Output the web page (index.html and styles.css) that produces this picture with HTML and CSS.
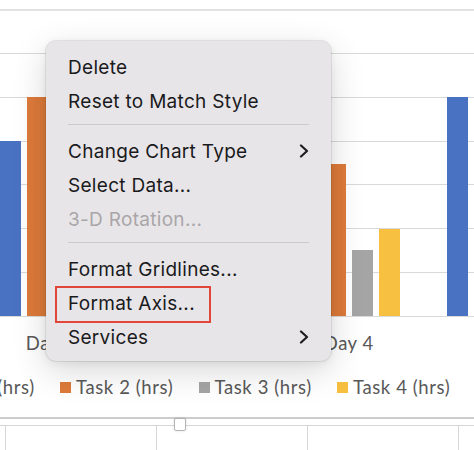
FILE: index.html
```html
<!DOCTYPE html>
<html>
<head>
<meta charset="utf-8">
<link rel="stylesheet" href="styles.css">
</head>
<body>
<div class="page">
  <div class="chart">
    <div class="plot">
      <div class="group">
        <div class="bar b1" style="height:175px"></div>
        <div class="bar b2" style="height:219px"></div>
        <div class="bar b3" style="height:131px"></div>
        <div class="bar b4" style="height:88px"></div>
      </div>
      <div class="group">
        <div class="bar b1" style="height:160px"></div>
        <div class="bar b2" style="height:200px"></div>
        <div class="bar b3" style="height:110px"></div>
        <div class="bar b4" style="height:140px"></div>
      </div>
      <div class="group">
        <div class="bar b1" style="height:200px"></div>
        <div class="bar b2" style="height:152px"></div>
        <div class="bar b3" style="height:66px"></div>
        <div class="bar b4" style="height:87px"></div>
      </div>
      <div class="group">
        <div class="bar b1" style="height:219px"></div>
        <div class="bar b2" style="height:150px"></div>
        <div class="bar b3" style="height:100px"></div>
        <div class="bar b4" style="height:120px"></div>
      </div>
    </div>
    <div class="cats">
      <span class="cat">Day 2</span>
      <span class="cat">Day 3</span>
      <span class="cat">Day 4</span>
    </div>
    <div class="legend">
      <div class="legend-item"><span class="swatch b1"></span><span>Task 1 (hrs)</span></div>
      <div class="legend-item"><span class="swatch b2"></span><span>Task 2 (hrs)</span></div>
      <div class="legend-item"><span class="swatch b3"></span><span>Task 3 (hrs)</span></div>
      <div class="legend-item"><span class="swatch b4"></span><span>Task 4 (hrs)</span></div>
    </div>
  </div>
  <div class="cells">
    <div class="cell"></div>
    <div class="cell"></div>
    <div class="cell"></div>
    <div class="cell"></div>
  </div>
  <div class="handle"></div>

  <div class="menu">
    <div class="item">Delete</div>
    <div class="item">Reset to Match Style</div>
    <div class="sep"></div>
    <div class="item">Change Chart Type
      <svg class="chev" width="10" height="14" viewBox="0 0 10 14"><polyline points="2,1.5 8,7 2,12.5" fill="none" stroke="#1e1e20" stroke-width="2.2" stroke-linecap="round" stroke-linejoin="round"/></svg>
    </div>
    <div class="item">Select Data...</div>
    <div class="item disabled">3-D Rotation...</div>
    <div class="sep"></div>
    <div class="item">Format Gridlines...</div>
    <div class="item">Format Axis...</div>
    <div class="item">Services
      <svg class="chev" width="10" height="14" viewBox="0 0 10 14"><polyline points="2,1.5 8,7 2,12.5" fill="none" stroke="#1e1e20" stroke-width="2.2" stroke-linecap="round" stroke-linejoin="round"/></svg>
    </div>
  </div>
  <div class="highlight"></div>
</div>
</body>
</html>
```
FILE: styles.css
```css
html, body {
  margin: 0;
  padding: 0;
  background: #ffffff;
}
.page {
  position: relative;
  width: 474px;
  height: 450px;
  overflow: hidden;
  padding-top: 9px;
  box-sizing: border-box;
}
.chart {
  border-top: 2px solid #e2e2e2;
  border-bottom: 2px solid #cdcdcd;
  height: 410px;
  box-sizing: border-box;
  font-family: "Lato", "Liberation Sans", sans-serif;
  color: #595959;
}
.plot {
  margin-top: 42px;
  height: 264px;
  box-sizing: border-box;
  border-bottom: 1px solid #d9d9d9;
  background: repeating-linear-gradient(to bottom, #d9d9d9 0, #d9d9d9 1px, transparent 1px, transparent 43.83px);
  display: flex;
  align-items: flex-end;
  gap: 47.5px;
}
.group {
  display: flex;
  align-items: flex-end;
  gap: 6.5px;
  flex: 0 0 auto;
}
.bar {
  width: 20.5px;
}
.b1 { background: #4a72c2; }
.b2 { background: #dd7a3a; }
.b3 { background: #a5a5a5; }
.b4 { background: #f7c040; }
.cats {
  display: flex;
  gap: 47.5px;
  padding-top: 16px;
  font-size: 18.5px;
  letter-spacing: 0.5px;
  line-height: 20px;
}
.cat {
  flex: 0 0 101.5px;
  text-align: center;
  white-space: nowrap;
}
.legend {
  display: flex;
  margin-top: 24px;
  margin-left: -78.5px;
  font-size: 18.5px;
  letter-spacing: 0.6px;
  line-height: 20px;
}
.legend-item {
  flex: 0 0 138.5px;
  display: flex;
  align-items: center;
  gap: 5px;
  white-space: nowrap;
}
.swatch {
  width: 11px;
  height: 11px;
  flex: 0 0 11px;
}
.cells {
  margin-top: 6px;
  border-top: 1px solid #d6d6d6;
  display: flex;
  padding-left: 5px;
  height: 40px;
}
.cell {
  flex: 0 0 151px;
  border-left: 1px solid #d6d6d6;
  box-sizing: border-box;
}
.handle {
  position: absolute;
  left: 174px;
  top: 418px;
  width: 12px;
  height: 13px;
  box-sizing: border-box;
  background: #ffffff;
  border: 1px solid #b4b4b4;
  border-radius: 2px;
  box-shadow: 0 0 3px rgba(0,0,0,0.12);
}
.menu {
  position: absolute;
  left: 46px;
  top: 41px;
  width: 285px;
  box-sizing: border-box;
  padding: 9px 0 7px 0;
  background: #e8e5e8;
  border-radius: 10px;
  box-shadow: 0 0 0 1px rgba(0,0,0,0.08), 0 10px 34px rgba(0,0,0,0.16), 0 2px 8px rgba(0,0,0,0.06);
  font-family: "Inter", "Liberation Sans", sans-serif;
  font-size: 19px;
  color: #1a1a1c;
}
.item {
  height: 34px;
  display: flex;
  align-items: center;
  justify-content: space-between;
  padding: 0 22px 0 22px;
  letter-spacing: 0.3px;
}
.item.disabled {
  color: #a9a6a9;
}
.chev {
  display: block;
}
.sep {
  height: 16px;
  margin: 0 22px;
  background: linear-gradient(#cdcacd, #cdcacd) no-repeat 0 6px / 100% 1px;
}
.highlight {
  position: absolute;
  left: 55px;
  top: 286px;
  width: 156px;
  height: 37px;
  box-sizing: border-box;
  border: 2px solid #e2463b;
}
```
